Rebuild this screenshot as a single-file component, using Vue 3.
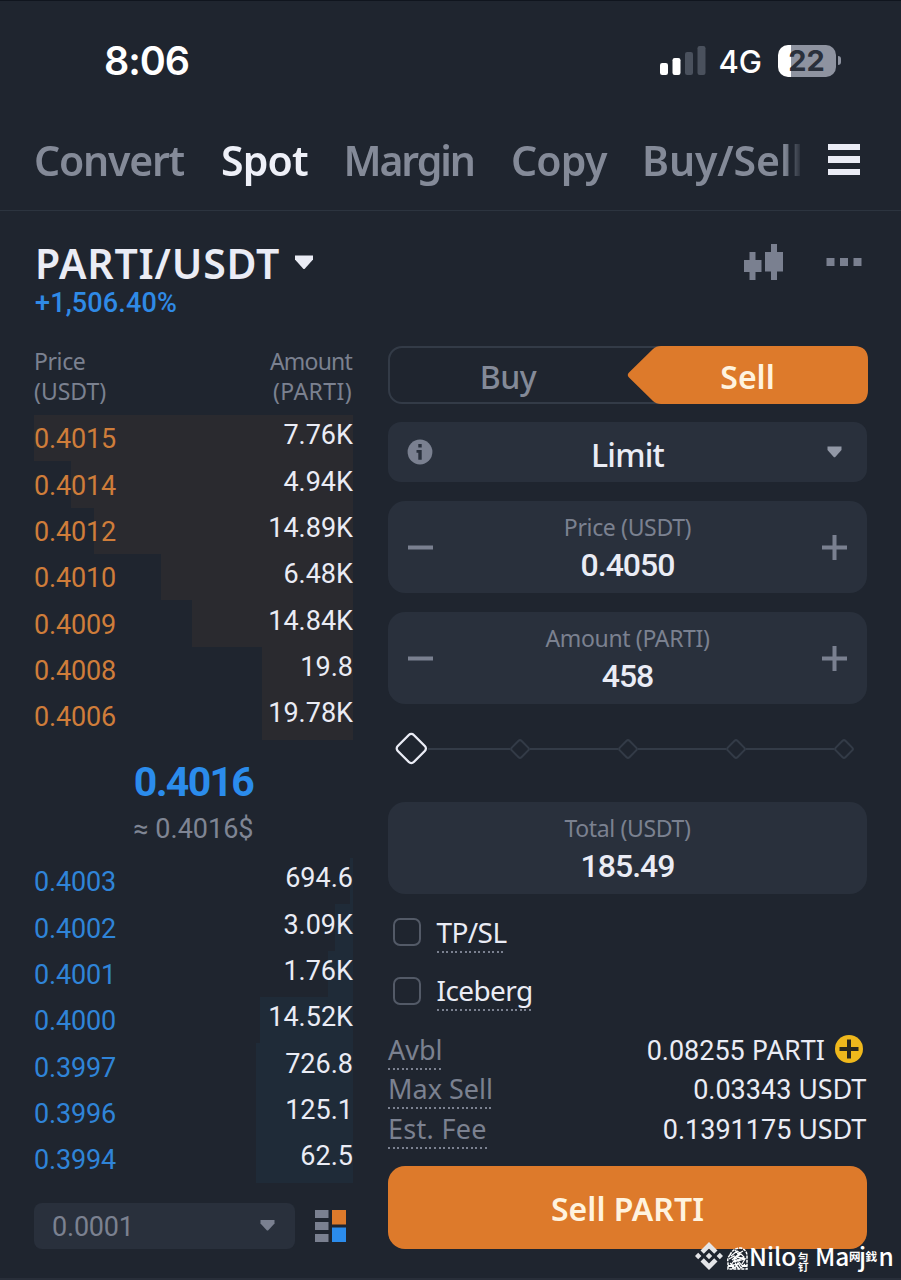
<template>
  <div class="trade-page">
    <header class="status-bar">
      <span class="clock">8:06</span>
      <div class="status-icons">
        <svg class="signal" width="46" height="30" viewBox="0 0 46 30">
          <rect x="0" y="17" width="8" height="12" rx="2.2" fill="#fff" />
          <rect x="12.5" y="12" width="8" height="17" rx="2.2" fill="#fff" />
          <rect x="25" y="6" width="8" height="23" rx="2.2" fill="#4a515d" />
          <rect x="37.5" y="0" width="8" height="29" rx="2.2" fill="#4a515d" />
        </svg>
        <span class="network">4G</span>
        <div class="battery"><span>22</span></div>
        <i class="battery-tip"></i>
      </div>
    </header>

    <nav class="tabs">
      <div class="tab-list">
        <span v-for="tab in tabs" :key="tab.label" class="tab" :class="[tab.key, { active: tab.key === activeTab }]">{{ tab.label }}</span>
      </div>
      <div class="menu"><i></i><i></i><i></i></div>
    </nav>

    <section class="pair">
      <div>
        <h1>
          <span>PARTI/USDT</span>
          <svg width="20" height="15" viewBox="0 0 20 15"><path d="M1 .5h18v4L11 13.6q-1 1-2 0L1 4.500z" fill="#eaecf5" /></svg>
        </h1>
        <p class="change">+1,506.40%</p>
      </div>
      <div class="pair-actions">
        <svg width="39" height="36" viewBox="0 0 39 36" fill="#7a8090">
          <path d="M5.500 8h6v8h6v12h-6v8h-6v-8H0V16h5.500z" />
          <path d="M27 0h6v8h6v19.500h-6V36h-6v-8.500h-6V8h6z" />
        </svg>
        <svg width="36" height="8" viewBox="0 0 36 8" fill="#7a8090">
          <rect x=".5" width="8" height="8" /><rect x="14" width="8" height="8" /><rect x="27.500" width="8" height="8" />
        </svg>
      </div>
    </section>

    <main class="columns">
      <section class="book">
        <div class="book-head">
          <div><span class="tight">Price</span><span>(USDT)</span></div>
          <div class="right"><span class="tighter">Amount</span><span class="loose">(PARTI)</span></div>
        </div>

        <div class="side asks">
          <div v-for="row in asks" :key="row.price" class="level">
            <i class="depth" :style="{ width: row.depth + 'px' }"></i>
            <span class="price">{{ row.price }}</span>
            <span class="amount">{{ row.amount }}</span>
          </div>
        </div>

        <div class="last">
          <strong>0.4016</strong>
          <span>≈ 0.4016$</span>
        </div>

        <div class="side bids">
          <div v-for="row in bids" :key="row.price" class="level">
            <i class="depth" :style="{ width: row.depth + 'px' }"></i>
            <span class="price">{{ row.price }}</span>
            <span class="amount">{{ row.amount }}</span>
          </div>
        </div>

        <div class="book-foot">
          <div class="tick">
            <span>0.0001</span>
            <svg width="15" height="11" viewBox="0 0 15 11"><path d="M.5 0h14v3.500L8.500 10q-1 1-2 0L.5 3.500z" fill="#7a8090" /></svg>
          </div>
          <svg width="31" height="32" viewBox="0 0 31 32">
            <g fill="#7a8090"><rect width="13.500" height="8" /><rect y="12" width="13.500" height="8" /><rect y="24" width="13.500" height="8" /></g>
            <rect x="17" width="14" height="14.500" fill="#dd7a2b" />
            <rect x="17" y="17.500" width="14" height="14.500" fill="#2b8cec" />
          </svg>
        </div>
      </section>

      <section class="form">
        <div class="toggle">
          <span class="buy">Buy</span>
          <span class="sell">
            <svg width="241" height="58" viewBox="0 0 241 58">
              <path d="M34 0H227Q241 0 241 14V44Q241 58 227 58H34Q29 58 26 55L2 31.500Q-.5 29 2 26.500L26 3Q29 0 34 0z" fill="#dd7a2b" />
            </svg>
            <b>Sell</b>
          </span>
        </div>

        <div class="type-select">
          <svg width="26" height="26" viewBox="0 0 26 26">
            <circle cx="13" cy="13" r="12.400" fill="#7a8090" />
            <path d="M11.300 5h3.400v3.500h-3.400zM9.500 11h5.200v9.800h-3.400v-7H9.500z" fill="#29303c" />
          </svg>
          <span>Limit</span>
          <svg width="15" height="12" viewBox="0 0 15 12"><path d="M.5.5h14v3.500L8.500 10.800q-1 1-2 0L.5 4z" fill="#9298a6" /></svg>
        </div>

        <div v-for="field in fields" :key="field.label" class="field">
          <svg width="25" height="25" viewBox="0 0 25 25"><path d="M0 10.500h25v4H0z" fill="#7a8090" /></svg>
          <div class="field-body">
            <span>{{ field.label }}</span>
            <strong>{{ field.value }}</strong>
          </div>
          <svg width="25" height="25" viewBox="0 0 25 25"><path d="M10.500 0h4v10.500H25v4H14.500V25h-4V14.500H0v-4h10.500z" fill="#7a8090" /></svg>
        </div>

        <svg class="slider" width="480" height="40" viewBox="0 0 480 40" fill="none">
          <path d="M40 20H122M142 20H230M250 20H338M358 20H446" stroke="#333b47" stroke-width="2" />
          <rect v-for="x in [132, 240, 348, 456]" :key="x" :x="x - 6.800" y="13.200" width="13.600" height="13.600" rx="2" :transform="`rotate(45 ${x} 20)`" stroke="#333b47" stroke-width="2" />
          <rect x="12" y="8.200" width="22.600" height="22.600" rx="3.500" transform="rotate(45 23.300 19.500)" stroke="#eaecf5" stroke-width="2.400" />
        </svg>

        <div class="field total">
          <div class="field-body">
            <span>Total (USDT)</span>
            <strong>185.49</strong>
          </div>
        </div>

        <div class="check"><i></i><span class="dotted">TP/SL</span></div>
        <div class="check"><i></i><span class="dotted">Iceberg</span></div>

        <div class="facts">
          <div class="fact">
            <span class="dotted">Avbl</span>
            <span class="value">
              <em>0.08255</em> PARTI
              <svg width="28" height="28" viewBox="0 0 28 28">
                <circle cx="14" cy="14" r="14" fill="#efb81c" />
                <path d="M12 4.500h4V12h7.500v4H16v7.500h-4V16H4.500v-4H12z" fill="#29271f" />
              </svg>
            </span>
          </div>
          <div class="fact">
            <span class="dotted">Max Sell</span>
            <span class="value"><em>0.03343</em> <u>USDT</u></span>
          </div>
          <div class="fact">
            <span class="dotted fee">Est. Fee</span>
            <span class="value"><em>0.1391175</em> <u>USDT</u></span>
          </div>
        </div>

        <button class="submit">Sell PARTI</button>
      </section>
    </main>

    <div class="watermark">
      <svg width="28" height="28" viewBox="0 0 28 28" fill="#e4e5e8">
        <path d="M14 0l8.500 8.500-3.300 3.300L14 6.600l-5.200 5.200-3.300-3.300z" />
        <path d="M14 28l8.500-8.500-3.300-3.300L14 21.400l-5.200-5.200-3.300 3.300z" />
        <path d="M14 10.800l3.200 3.200-3.200 3.200-3.200-3.200zM3.200 10.800L6.400 14l-3.200 3.200L0 14zM24.800 10.800L28 14l-3.200 3.200-3.200-3.200z" />
      </svg>
      <svg class="seal" width="21" height="23" viewBox="0 0 21 23" fill="none" stroke="#fff">
        <path d="M3 8Q6 1 14 1q6 2 6 8v13H1v-6Q0 11 3 8z" stroke-width="1.500" stroke-dasharray="3 1" />
        <path d="M4 9l6-5 3 2-8 7 9-6 3 3-10 5 11-3-3 5-11 1 5-7 7 9M3 16l5 5 3-5 3 5 4-4M2 12l5-3 2 9M8 3l3 4 5-3" stroke-width="1.200" />
        <path d="M1 19h5v3M9 18l3 4M15 19h5M10 10l8 2" stroke-width="1.800" />
      </svg>
      <div class="name">
        <span>Nilo</span>
        <span class="stack"><small>勻</small><small>钉</small></span>
        <span>Ma</span>
        <small>网</small>
        <span>j</span>
        <small>鈛</small>
        <span>n</span>
      </div>
    </div>
  </div>
</template>

<script setup>
import { ref } from 'vue';

const activeTab = ref('spot');

const tabs = [
  { key: 'convert', label: 'Convert' },
  { key: 'spot', label: 'Spot' },
  { key: 'margin', label: 'Margin' },
  { key: 'copy', label: 'Copy' },
  { key: 'buysell', label: 'Buy/Sell' }
];

const asks = [
  { price: '0.4015', amount: '7.76K', depth: 319 },
  { price: '0.4014', amount: '4.94K', depth: 282 },
  { price: '0.4012', amount: '14.89K', depth: 259 },
  { price: '0.4010', amount: '6.48K', depth: 192 },
  { price: '0.4009', amount: '14.84K', depth: 161 },
  { price: '0.4008', amount: '19.8', depth: 91 },
  { price: '0.4006', amount: '19.78K', depth: 91 }
];

const bids = [
  { price: '0.4003', amount: '694.6', depth: 3 },
  { price: '0.4002', amount: '3.09K', depth: 18 },
  { price: '0.4001', amount: '1.76K', depth: 25 },
  { price: '0.4000', amount: '14.52K', depth: 93 },
  { price: '0.3997', amount: '726.8', depth: 97 },
  { price: '0.3996', amount: '125.1', depth: 97 },
  { price: '0.3994', amount: '62.5', depth: 97 }
];

const fields = [
  { label: 'Price (USDT)', value: '0.4050' },
  { label: 'Amount (PARTI)', value: '458' }
];
</script>

<style>
body {
  margin: 0;
  background: #1f252f;
}
</style>

<style scoped>
.trade-page {
  position: relative;
  box-sizing: border-box;
  width: 901px;
  height: 1280px;
  overflow: hidden;
  border-top: 1px solid #10151e;
  border-bottom: 2px solid #282e39;
  background: #1f252f;
  color: #eaecf5;
  font-family: "Noto Sans", "Liberation Sans", sans-serif;
}

.trade-page svg {
  display: block;
  flex: none;
}

.status-bar {
  display: flex;
  align-items: center;
  justify-content: space-between;
  height: 120px;
  padding: 0 60.5px 0 104px;
  color: #fff;
  font-family: Inter, sans-serif;
}

.clock {
  font-size: 39.5px;
  font-weight: 600;
  letter-spacing: -1.1px;
}

.status-icons {
  display: flex;
  align-items: center;
  margin-top: -1px;
}

.network {
  width: 44px;
  margin: 2px 0 0 13px;
  font-size: 31px;
  font-weight: 500;
}

.battery {
  width: 58px;
  height: 32px;
  margin-left: 15px;
  border-radius: 10px;
  background: linear-gradient(90deg, #fff 13.5px, #8e93a0 13.5px);
  color: #2a303b;
  font-size: 29px;
  font-weight: 700;
  line-height: 32px;
  text-align: center;
}

.battery-tip {
  width: 3px;
  height: 9px;
  margin-left: 2px;
  border-radius: 0 5px 5px 0;
  background: #8e93a0;
}

.tabs {
  display: flex;
  align-items: center;
  justify-content: space-between;
  box-sizing: border-box;
  height: 90px;
  padding: 0 41px 12px 34px;
  border-bottom: 1px solid #2c343f;
}

.tab-list {
  display: flex;
  width: 768px;
  overflow: hidden;
  mask-image: linear-gradient(90deg, #000 750px, transparent 769px);
}

.tab {
  flex: none;
  color: #848a98;
  font-size: 41px;
  font-weight: 600;
  line-height: 56px;
}

.tab.active {
  color: #eef0f8;
}

.convert {
  width: 187px;
  letter-spacing: -1.2px;
}

.spot {
  width: 122.5px;
  letter-spacing: -0.8px;
}

.margin {
  width: 167.5px;
  letter-spacing: -2.1px;
}

.copy {
  width: 131px;
  letter-spacing: -0.8px;
}

.buysell {
  letter-spacing: -0.1px;
}

.menu {
  display: grid;
  gap: 6.5px;
  width: 32px;
}

.menu i {
  height: 6.3px;
  background: #eaecf5;
}

.pair {
  display: flex;
  justify-content: space-between;
  box-sizing: border-box;
  height: 134px;
  padding: 27px 39px 0 35px;
}

.pair h1 {
  display: flex;
  align-items: center;
  gap: 14px;
  margin: 0;
  font-size: 41px;
  font-weight: 600;
  letter-spacing: 0.8px;
  line-height: 50px;
}

.pair h1 svg {
  margin-top: -2px;
}

.change {
  margin: 0;
  color: #2f8ae6;
  font: 500 27px/30px Roboto, sans-serif;
  letter-spacing: 0.15px;
}

.pair-actions {
  display: flex;
  align-items: center;
  gap: 43px;
  height: 48px;
}

.columns {
  display: grid;
  grid-template-columns: 319px 480px;
  gap: 35px;
  padding-left: 34px;
}

.book-head {
  display: flex;
  justify-content: space-between;
  height: 70px;
  padding-top: 1px;
  box-sizing: border-box;
  color: #7b8190;
  font-size: 23px;
  line-height: 30px;
}

.book-head span {
  display: block;
}

.tight {
  letter-spacing: -0.4px;
}

.tighter {
  letter-spacing: -0.8px;
}

.loose {
  letter-spacing: 0.4px;
}

.right {
  padding-right: 1px;
  text-align: right;
}

.level {
  position: relative;
  display: flex;
  align-items: center;
  justify-content: space-between;
  box-sizing: border-box;
  height: 46.36px;
  padding-top: 2px;
  font: 400 27px/44px Roboto, sans-serif;
}

.depth {
  position: absolute;
  top: 0;
  right: 0;
  bottom: 0;
}

.asks .depth {
  background: #2a2a2f;
}

.bids .depth {
  background: #1f2b38;
}

.price,
.amount {
  position: relative;
}

.price {
  letter-spacing: -0.15px;
}

.asks .price {
  color: #cf7d3a;
}

.bids .price {
  color: #2f84d8;
}

.amount {
  padding-bottom: 8px;
}

.last {
  display: flex;
  flex-direction: column;
  align-items: center;
  box-sizing: border-box;
  height: 118.5px;
  padding-top: 19px;
  color: #7f8594;
  font: 400 27px/48px Roboto, sans-serif;
}

.last strong {
  color: #2b8cec;
  font-size: 41px;
  font-weight: 700;
  letter-spacing: -1.7px;
  line-height: 46px;
}

.book-foot {
  display: flex;
  align-items: center;
  gap: 20px;
  margin-top: 20px;
}

.tick {
  display: flex;
  align-items: center;
  justify-content: space-between;
  box-sizing: border-box;
  width: 261px;
  height: 46px;
  padding: 0 20px 0 18px;
  border-radius: 8px;
  background: #29303c;
  color: #7b8190;
  font: 400 27px/46px Roboto, sans-serif;
}

.tick span {
  padding-top: 2px;
  letter-spacing: -0.2px;
}

.toggle {
  position: relative;
  display: flex;
  box-sizing: border-box;
  height: 58px;
  margin-top: 1px;
  border: 2px solid #333b47;
  border-radius: 14px;
  font-size: 32px;
  line-height: 58px;
  text-align: center;
}

.buy {
  width: 236px;
  color: #848a98;
  font-weight: 500;
  letter-spacing: -0.5px;
}

.sell {
  position: absolute;
  top: -2px;
  right: -2px;
  width: 241px;
  height: 58px;
  color: #fff3df;
}

.sell b {
  position: absolute;
  inset: 2px 0 0;
  font-weight: 600;
}

.type-select {
  display: flex;
  align-items: center;
  justify-content: space-between;
  box-sizing: border-box;
  width: 479px;
  height: 60px;
  margin-top: 18px;
  padding: 0 25px 0 19px;
  border-radius: 13px;
  background: #29303c;
  font-size: 32px;
  font-weight: 500;
}

.type-select span {
  padding: 5px 5px 0 0;
  letter-spacing: -0.8px;
}

.field {
  display: flex;
  align-items: center;
  justify-content: space-between;
  box-sizing: border-box;
  width: 479px;
  height: 92px;
  margin-top: 19px;
  padding: 0 20px;
  border-radius: 17px;
  background: #29303c;
}

.field-body {
  display: flex;
  flex: 1;
  flex-direction: column;
  text-align: center;
}

.field-body span {
  color: #7b8190;
  font-size: 23px;
  letter-spacing: -0.35px;
  line-height: 34px;
}

.field-body strong {
  padding-top: 1px;
  font: 500 32px/40px Roboto, sans-serif;
  letter-spacing: -1px;
}

.slider {
  margin-top: 25px;
}

.field.total {
  margin-top: 33px;
}

.check {
  display: flex;
  align-items: center;
  height: 58.5px;
  padding-left: 4.5px;
  font-size: 28px;
}

.total + .check {
  margin-top: 9px;
}

.check i {
  box-sizing: border-box;
  width: 28px;
  height: 28px;
  margin-right: 16px;
  border: 2px solid #535a67;
  border-radius: 7px;
}

.dotted {
  background: repeating-linear-gradient(90deg, #7b8190 0 2px, transparent 2px 4.6px) left bottom / 100% 2px no-repeat;
}

.check .dotted {
  height: 39px;
  margin-top: 2px;
  letter-spacing: -0.6px;
  line-height: 37px;
}

.facts {
  margin-top: 12px;
}

.fact {
  display: flex;
  justify-content: space-between;
  height: 39.3px;
  font-size: 27px;
  line-height: 36px;
}

.fact .dotted {
  height: 38px;
  color: #7b8190;
}

.fact .fee {
  letter-spacing: 0.3px;
}

.value {
  display: flex;
  gap: 7px;
  padding-right: 2px;
}

.value u {
  letter-spacing: -0.2px;
  text-decoration: none;
}

.value svg {
  margin: 3px 3px 0 3px;
}

.value em {
  font: 400 27px/38px Roboto, sans-serif;
}

.submit {
  display: block;
  width: 479px;
  height: 83px;
  margin-top: 16px;
  padding: 3px 0 0;
  border: 0;
  border-radius: 17px;
  background: #dd7a2b;
  color: #fff3df;
  font: 600 32px "Noto Sans", sans-serif;
}

.watermark {
  position: absolute;
  top: 1241px;
  left: 695px;
  display: flex;
  align-items: center;
  height: 28px;
  color: #fff;
}

.seal {
  margin: 5px 0 0 4px;
}

.name {
  display: grid;
  grid-template-columns: 49px 17px 34px 10px 6.5px 13px 16px;
  align-items: center;
  margin-left: 1px;
  font: 500 24.5px/28px "Noto Sans CJK SC", sans-serif;
}

.name small {
  font-size: 11.5px;
  font-weight: 700;
  line-height: 12px;
}

.stack {
  display: grid;
  gap: 0;
  padding-top: 11px;
}

.stack small {
  height: 10px;
  font-size: 10.5px;
  line-height: 10px;
}
</style>
